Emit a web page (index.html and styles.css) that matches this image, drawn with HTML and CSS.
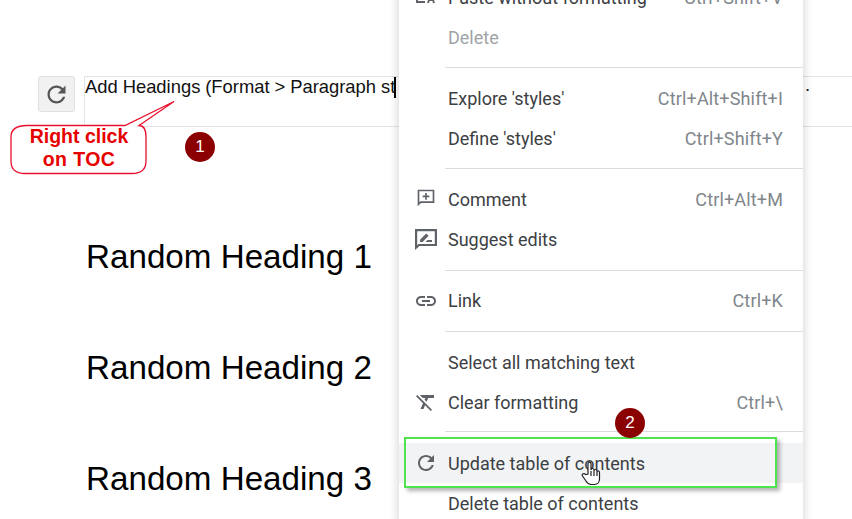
FILE: index.html
```html
<!DOCTYPE html>
<html lang="en">
<head>
    <meta charset="UTF-8">
    <title>Update table of contents</title>
    <link rel="stylesheet" href="styles.css">
</head>
<body>
    <div class="stage">
        <div class="doc">
            <div class="toc-row">
                <button class="toc-refresh">
                    <svg viewBox="0 0 24 24" width="27" height="27"><path d="M17.65 6.35C16.2 4.9 14.21 4 12 4c-4.42 0-7.99 3.58-7.99 8s3.57 8 7.99 8c3.73 0 6.84-2.55 7.73-6h-2.08c-.82 2.33-3.04 4-5.65 4-3.31 0-6-2.69-6-6s2.69-6 6-6c1.66 0 3.14.69 4.22 1.78L13 11h7V4l-2.35 2.35z"/></svg>
                </button>
                <div class="toc-box">
                    <span class="toc-text">Add Headings (Format &gt; Paragraph st</span><span class="caret"></span>
                    <span class="toc-end">.</span>
                </div>
            </div>
            <h1>Random Heading 1</h1>
            <h1>Random Heading 2</h1>
            <h1>Random Heading 3</h1>
        </div>

        <div class="menu">
            <div class="menu-item">
                <svg class="icon" viewBox="0 0 24 24"><path d="M2 2v16h9v-2H4V2zM13 18l3-9h2l3 9h-2l-.6-2h-2.8l-.6 2z"/></svg>
                <span class="label">Paste without formatting</span>
                <span class="shortcut">Ctrl+Shift+V</span>
            </div>
            <div class="menu-item disabled"><span class="label">Delete</span></div>
            <div class="sep"></div>
            <div class="menu-item"><span class="label">Explore 'styles'</span><span class="shortcut">Ctrl+Alt+Shift+I</span></div>
            <div class="menu-item"><span class="label">Define 'styles'</span><span class="shortcut">Ctrl+Shift+Y</span></div>
            <div class="sep"></div>
            <div class="menu-item">
                <svg class="icon icon-small" viewBox="0 0 24 24"><path d="M22 2H2v20l4-4h16zm-2 14H5.200L4 17.200V4h16zM11 6h2v3h3v2h-3v3h-2v-3H8V9h3z"/></svg>
                <span class="label">Comment</span>
                <span class="shortcut">Ctrl+Alt+M</span>
            </div>
            <div class="menu-item">
                <svg class="icon" viewBox="0 0 24 24"><path d="M23 2H1v21l4.500-4H23zm-2.200 15H4.600l-1.400 1.300V4.200h17.600zM6 15l.2-2.600 6-6 2.400 2.400-6 6.200zm5.500 0l2-2H18v2z"/></svg>
                <span class="label">Suggest edits</span>
            </div>
            <div class="sep"></div>
            <div class="menu-item">
                <svg class="icon" viewBox="0 0 24 24"><path d="M3.900 12c0-1.710 1.390-3.100 3.100-3.100h4V7H7c-2.760 0-5 2.240-5 5s2.240 5 5 5h4v-1.900H7c-1.710 0-3.100-1.390-3.100-3.100zM8 13h8v-2H8v2zm9-6h-4v1.900h4c1.710 0 3.100 1.390 3.100 3.100s-1.390 3.100-3.100 3.100h-4V17h4c2.760 0 5-2.240 5-5s-2.240-5-5-5z"/></svg>
                <span class="label">Link</span>
                <span class="shortcut">Ctrl+K</span>
            </div>
            <div class="sep sep-after-link"></div>
            <div class="menu-item"><span class="label">Select all matching text</span></div>
            <div class="menu-item">
                <svg class="icon" viewBox="0 0 24 24"><path d="M3.270 5L2 6.270l6.970 6.970L6.500 19h3l1.570-3.660L16.730 21 18 19.730 3.550 5.270 3.270 5zM6 5v.18L8.820 8h2.400l-.72 1.680 2.100 2.100L14.210 8H20V5H6z"/></svg>
                <span class="label">Clear formatting</span>
                <span class="shortcut">Ctrl+\</span>
            </div>
            <div class="sep sep-before-update"></div>
            <div class="menu-item hover">
                <svg class="icon" viewBox="0 0 24 24"><path d="M17.650 6.350C16.200 4.900 14.210 4 12 4c-4.420 0-7.990 3.580-7.990 8s3.570 8 7.990 8c3.730 0 6.840-2.550 7.730-6h-2.080c-.82 2.330-3.040 4-5.650 4-3.310 0-6-2.690-6-6s2.690-6 6-6c1.660 0 3.140.69 4.220 1.780L13 11h7V4l-2.350 2.350z"/></svg>
                <span class="label">Update table of contents</span>
            </div>
            <div class="menu-item"><span class="label">Delete table of contents</span></div>
        </div>

        <div class="callout">
            <svg class="callout-shape" viewBox="0 0 166 76" width="166" height="76"><path d="M17 25.500H115L164 1.500L129 25.500C133 25.500 136 29 136 37V61C136 69 132 73.500 122 73.500H15C5 73.500 1 69 1 61V37C1 29 6 25.500 17 25.500Z"/></svg>
            <div class="callout-text">Right click<br><span class="callout-line">on TOC</span></div>
        </div>

        <div class="badge badge-one">1</div>
        <div class="highlight"></div>
        <div class="badge badge-two">2</div>

        <svg class="hand" viewBox="0 0 20 26" width="20" height="26"><path d="M7 14V4c0-2.500 3-2.500 3 0v6c0-2 3-2 3 0v1c0-2 3-2 3 0v1c0-1.500 2.500-1.500 2.500 .5V19c0 3-2 5.500-5 5.500H10c-2.500 0-3.500-1-5-3.500L1.500 16c-1-2 1.500-3.500 3-1.500z"/><path d="M10 11v5M13 11v5M16 12v4"/></svg>
    </div>
</body>
</html>
```
FILE: styles.css
```css
body {
    margin: 0;
    background-color: #ffffff;
    font-family: 'Liberation Sans', Arial, sans-serif;
}

.stage {
    position: relative;
    width: 852px;
    height: 519px;
    overflow: hidden;
}

.doc {
    padding: 76px 0 0 38px;
}

.toc-row {
    display: flex;
    align-items: flex-start;
}

.toc-refresh {
    width: 37px;
    height: 36px;
    margin-right: 9px;
    padding: 0;
    display: flex;
    align-items: center;
    justify-content: center;
    background-color: #f1f1f1;
    border: 1px solid #e0e0e0;
    border-radius: 3px;
}

.toc-refresh svg {
    fill: #555555;
}

.toc-box {
    position: relative;
    flex: 1;
    height: 49px;
    border: 1px solid #e4e4e4;
    border-right: none;
    color: #111111;
    font-size: 18.4px;
    line-height: 19px;
    white-space: nowrap;
}

.toc-text {
    word-spacing: -0.2px;
}

.caret {
    display: inline-block;
    width: 2px;
    height: 21px;
    margin-left: -1px;
    vertical-align: top;
    background-color: #000000;
}

.toc-end {
    position: absolute;
    left: 720px;
    top: -2px;
}

h1 {
    margin: 0 0 73px 48px;
    color: #000000;
    font-size: 33.2px;
    font-weight: normal;
    line-height: 38px;
}

.doc h1:nth-child(2) {
    margin-top: 111px;
}

.menu {
    position: absolute;
    left: 399px;
    top: -23px;
    width: 404px;
    background-color: #ffffff;
    box-shadow: 0 2px 10px rgba(0, 0, 0, 0.2);
    font-family: Roboto, sans-serif;
}

.menu-item {
    position: relative;
    display: flex;
    align-items: center;
    justify-content: space-between;
    height: 40.1px;
    padding: 0 20px 0 49px;
    color: #3c4043;
    font-size: 18px;
}

.menu-item.disabled {
    color: #a0a3a6;
}

.menu-item.hover {
    background-color: #f1f3f4;
}

.icon {
    position: absolute;
    left: 15px;
    top: 8px;
    width: 24px;
    height: 24px;
    fill: #5f6368;
}

.icon-small {
    left: 17px;
    top: 9px;
    width: 20px;
    height: 20px;
}

.shortcut {
    color: #80868b;
    letter-spacing: 0.15px;
}

.sep {
    height: 1px;
    margin: 10px 0 10px 46px;
    background-color: #dadce0;
}

.sep-after-link {
    margin-bottom: 10.5px;
}

.sep-before-update {
    margin-top: 9px;
    margin-bottom: 11px;
}

.callout {
    position: absolute;
    left: 10px;
    top: 100px;
    width: 166px;
    height: 76px;
}

.callout-shape {
    display: block;
    fill: #ffffff;
    stroke: #e8112d;
    stroke-width: 1.3;
}

.callout-text {
    position: absolute;
    left: 0;
    top: 25px;
    width: 138px;
    color: #e60000;
    font-size: 19.5px;
    font-weight: bold;
    line-height: 23px;
    text-align: center;
}

.callout-line {
    letter-spacing: 0.4px;
}

.badge {
    position: absolute;
    width: 30px;
    height: 30px;
    border-radius: 50%;
    background-color: #8b0000;
    color: #ffffff;
    font-size: 17px;
    line-height: 30px;
    text-align: center;
}

.badge-one {
    left: 185px;
    top: 132px;
}

.badge-two {
    left: 615px;
    top: 408px;
}

.highlight {
    position: absolute;
    left: 404px;
    top: 437px;
    width: 369px;
    height: 47px;
    border: 2px solid #4fe34f;
    box-shadow: 3px 3px 4px rgba(0, 0, 0, 0.3);
}

.hand {
    position: absolute;
    left: 581px;
    top: 460px;
    fill: #ffffff;
    stroke: #222222;
    stroke-width: 1.2;
}
```
